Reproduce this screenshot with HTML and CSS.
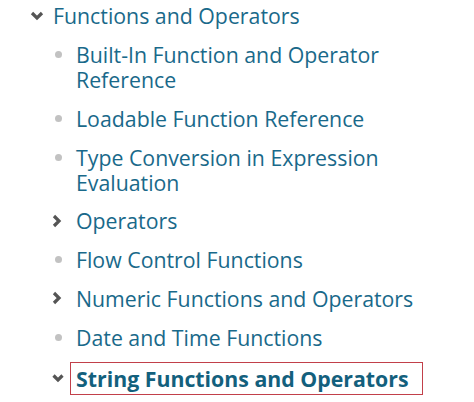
FILE: index.html
```html
<!DOCTYPE html>
<html>
<head>
<meta charset="utf-8">
<link rel="stylesheet" href="styles.css">
</head>
<body>
<nav class="toc">
  <div class="row top">
    <span class="icon"><svg width="14" height="10" viewBox="0 0 14 10"><polyline points="2,2 7,7 12,2" fill="none" stroke="#555" stroke-width="3.2"/></svg></span>
    <span class="label">Functions and Operators</span>
  </div>
  <ul class="sub">
    <li class="row"><span class="icon"><span class="dot"></span></span><span class="label">Built-In Function and Operator Reference</span></li>
    <li class="row"><span class="icon"><span class="dot"></span></span><span class="label">Loadable Function Reference</span></li>
    <li class="row"><span class="icon"><span class="dot"></span></span><span class="label">Type Conversion in Expression Evaluation</span></li>
    <li class="row"><span class="icon"><svg width="10" height="14" viewBox="0 0 10 14"><polyline points="2,2 7,7 2,12" fill="none" stroke="#555" stroke-width="3.2"/></svg></span><span class="label">Operators</span></li>
    <li class="row"><span class="icon"><span class="dot"></span></span><span class="label">Flow Control Functions</span></li>
    <li class="row"><span class="icon"><svg width="10" height="14" viewBox="0 0 10 14"><polyline points="2,2 7,7 2,12" fill="none" stroke="#555" stroke-width="3.2"/></svg></span><span class="label">Numeric Functions and Operators</span></li>
    <li class="row"><span class="icon"><span class="dot"></span></span><span class="label">Date and Time Functions</span></li>
    <li class="row current"><span class="icon"><svg width="12" height="9" viewBox="0 0 12 9"><polyline points="1.5,1.5 6,6 10.5,1.5" fill="none" stroke="#555" stroke-width="3.2"/></svg></span><span class="label">String Functions and Operators</span></li>
  </ul>
</nav>
</body>
</html>
```
FILE: styles.css
```css
html, body {
  margin: 0;
  padding: 0;
  background: #fff;
}
.toc {
  font-family: "Open Sans", "Noto Sans", sans-serif;
  font-size: 21.3px;
  line-height: 25px;
  color: #19698a;
  padding-top: 3px;
  width: 474px;
}
.row {
  display: flex;
  align-items: flex-start;
}
.top {
  padding-left: 30px;
}
.top .icon {
  width: 23px;
}
.icon {
  display: flex;
  align-items: center;
  height: 25px;
  flex: none;
}
.sub {
  list-style: none;
  margin: 14px 0 0 0;
  padding: 0 0 0 52px;
  display: flex;
  flex-direction: column;
  gap: 13.8px;
}
.sub .icon {
  width: 24px;
}
.sub .label {
  width: 340px;
}
.dot {
  display: block;
  width: 7px;
  height: 7px;
  border-radius: 50%;
  background: #c2c2c2;
  margin-left: 3px;
}
.current {
  margin-top: -2px;
}
.current .icon {
  height: 33px;
  width: 18px;
}
.current .label {
  width: auto;
  font-weight: 700;
  color: #13607d;
  border: 1.5px solid #c2404a;
  padding: 3px 14px 3px 5px;
}
```
